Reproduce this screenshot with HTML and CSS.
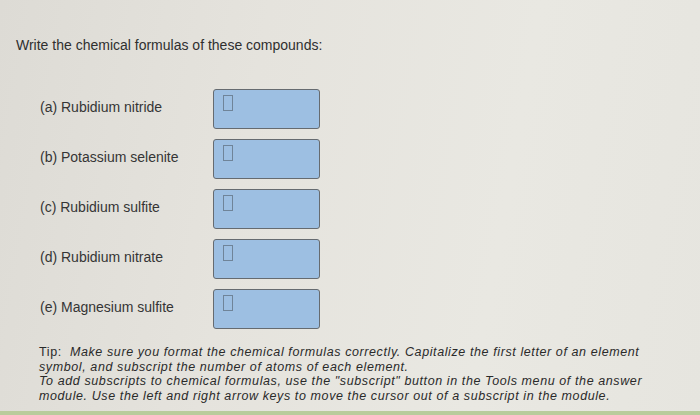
FILE: index.html
```html
<!DOCTYPE html>
<html>
<head>
<meta charset="utf-8">
<link rel="stylesheet" href="styles.css">
</head>
<body>
<div class="page">
  <p class="title">Write the chemical formulas of these compounds:</p>
  <div class="rows">
    <div class="row"><span class="label">(a) Rubidium nitride</span><div class="box"><span class="caret"></span></div></div>
    <div class="row"><span class="label">(b) Potassium selenite</span><div class="box"><span class="caret"></span></div></div>
    <div class="row"><span class="label">(c) Rubidium sulfite</span><div class="box"><span class="caret"></span></div></div>
    <div class="row"><span class="label">(d) Rubidium nitrate</span><div class="box"><span class="caret"></span></div></div>
    <div class="row"><span class="label">(e) Magnesium sulfite</span><div class="box"><span class="caret"></span></div></div>
  </div>
  <div class="tip">
    <p><span class="tip-key">Tip:</span>&nbsp; <em>Make sure you format the chemical formulas correctly. Capitalize the first letter of an element<br>symbol, and subscript the number of atoms of each element.</em></p>
    <p><em>To add subscripts to chemical formulas, use the "subscript" button in the Tools menu of the answer<br>module. Use the left and right arrow keys to move the cursor out of a subscript in the module.</em></p>
  </div>
  <div class="strip"></div>
</div>
</body>
</html>
```
FILE: styles.css
```css
html, body {
  margin: 0;
  padding: 0;
}
body {
  width: 700px;
  height: 415px;
  overflow: hidden;
  font-family: "Liberation Sans", Arial, sans-serif;
  color: #333;
}
.page {
  height: 415px;
  display: flex;
  flex-direction: column;
  background: linear-gradient(100deg, #dddbd5 0%, #e5e3dd 35%, #e9e8e2 70%, #e6e5df 100%);
}
.title {
  margin: 37px 0 0 16px;
  font-size: 14px;
  line-height: 16px;
  color: #2f2f2f;
}
.rows {
  margin-top: 36px;
  display: flex;
  flex-direction: column;
  gap: 10px;
}
.row {
  display: flex;
  align-items: center;
  height: 40px;
}
.label {
  flex: 0 0 213px;
  padding-left: 40px;
  box-sizing: border-box;
  font-size: 14px;
  line-height: 16px;
  color: #353535;
  margin-top: -5px;
}
.box {
  width: 107px;
  height: 40px;
  box-sizing: border-box;
  background: #9dbfe2;
  border: 1px solid #666b70;
  border-radius: 3px;
  padding: 5px 0 0 9px;
}
.caret {
  display: block;
  width: 10px;
  height: 16px;
  box-sizing: border-box;
  border: 1px solid #6f8499;
}
.tip {
  margin: 16px 0 0 39px;
  font-size: 12.5px;
  letter-spacing: 0.6px;
  line-height: 14.5px;
  color: #2a2a2a;
  white-space: nowrap;
}
.tip p {
  margin: 0;
}
.tip-key {
  font-style: normal;
}
.strip {
  margin-top: auto;
  height: 4px;
  background: #b9cc9c;
}
```
